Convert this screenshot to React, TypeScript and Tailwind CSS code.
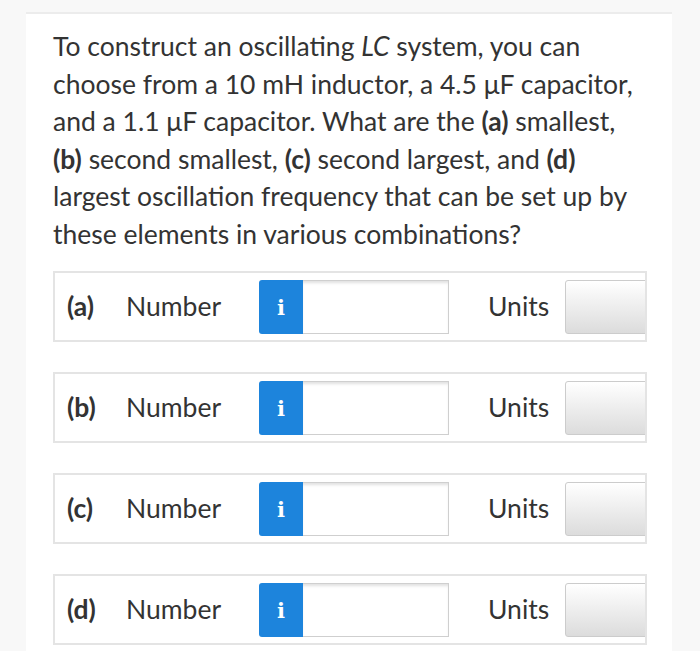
const parts = ['a', 'b', 'c', 'd']

function AnswerRow({ part }: { part: string }) {
  return (
    <div className="flex items-center h-[71px] border-2 border-[#e4e4e4] bg-white pl-[12px] overflow-hidden text-[26.5px]">
      <span className="w-[59px] shrink-0 font-bold">({part})</span>
      <span className="w-[133px] shrink-0">Number</span>
      <div className="flex h-[54px] shrink-0">
        <div className="w-[44px] h-full bg-[#1d84dc] rounded-l-[3px] flex items-center justify-center">
          <span className="text-white font-bold text-[21px] leading-none mt-[2px]" style={{ fontFamily: '"DejaVu Serif", serif' }}>i</span>
        </div>
        <div className="w-[146px] h-full bg-white border border-[#cfcfcf] border-l-0 shadow-[inset_0_3px_3px_-1px_rgba(0,0,0,0.12)]" />
      </div>
      <span className="ml-[39px] w-[77px] shrink-0">Units</span>
      <div className="w-[100px] h-[54px] shrink-0 rounded-l-[3px] border border-[#cccccc] bg-gradient-to-b from-white to-[#dcdcdc]" />
    </div>
  )
}

export default function App() {
  return (
    <div className="min-h-[651px] bg-[#f8f8f8] pl-[26px] pt-[12px] text-[#333333]" style={{ fontFamily: 'Lato, "Open Sans", sans-serif' }}>
      <div className="w-[646px] min-h-[639px] bg-white border-t-2 border-[#ececec] pl-[27px] pr-[25px] pt-[14px]">
        <p className="text-[26.5px] leading-[37.5px]">
          To construct an oscillating <i>LC</i> system, you can choose from a 10 mH inductor, a 4.5 μF capacitor, and a 1.1 μF capacitor. What are the <b>(a)</b> smallest, <b>(b)</b> second smallest, <b>(c)</b> second largest, and <b>(d)</b> largest oscillation frequency that can be set up by these elements in various combinations?
        </p>
        <div className="mt-[18px] flex flex-col gap-[30px]">
          {parts.map((p) => (
            <AnswerRow key={p} part={p} />
          ))}
        </div>
      </div>
    </div>
  )
}
